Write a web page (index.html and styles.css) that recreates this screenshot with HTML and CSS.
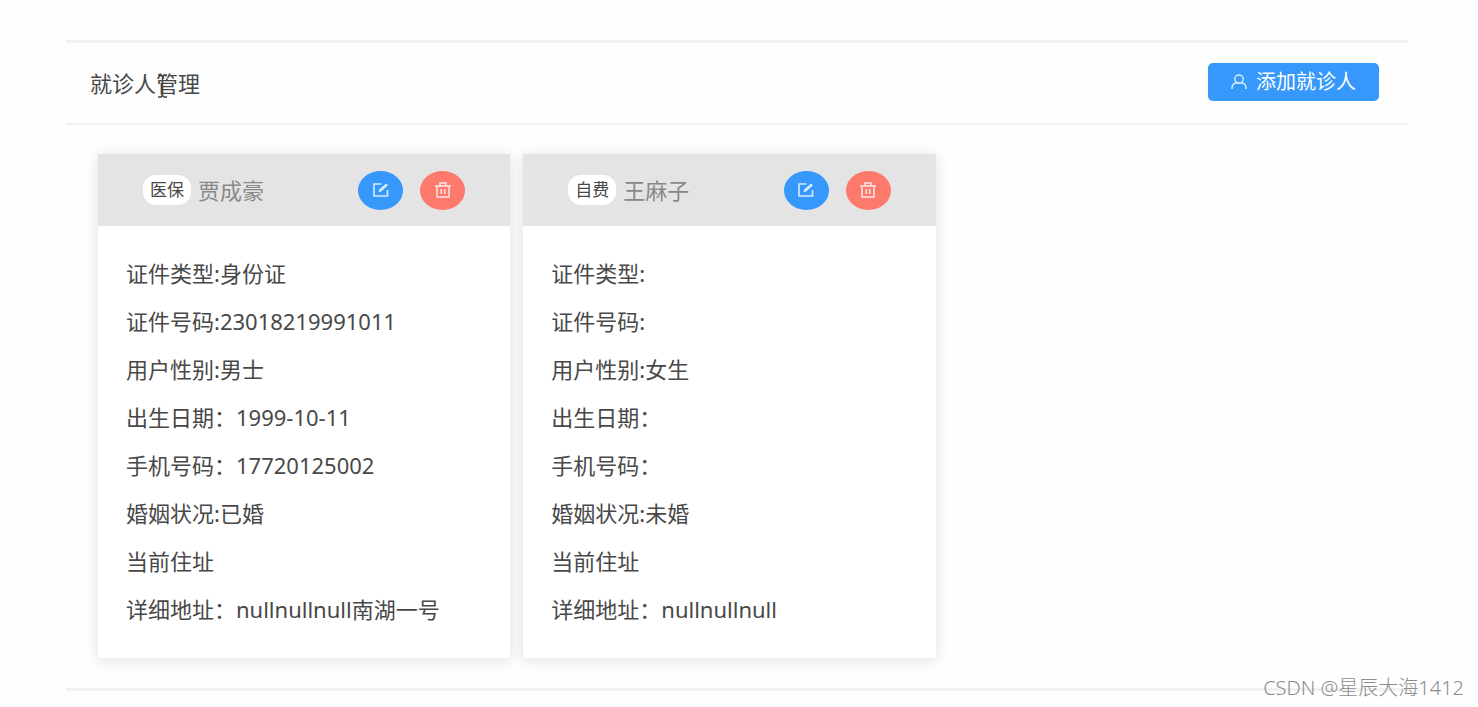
FILE: index.html
```html
<!DOCTYPE html>
<html lang="zh-CN">
<head>
    <meta charset="UTF-8">
    <title>就诊人管理</title>
    <link rel="stylesheet" href="styles.css">
</head>
<body>
<svg class="icons" aria-hidden="true">
    <symbol id="icon-edit" viewBox="0 0 18 16">
        <path d="M9.5 2H2v12h13.5V8" fill="none" stroke="currentColor" stroke-width="1.6"/>
        <path d="M6.5 10.5l.7-3L14 1.500l2 1.800-6.800 6.200z" fill="currentColor"/>
    </symbol>
    <symbol id="icon-delete" viewBox="0 0 18 16">
        <path d="M1 4h16M3 4v11h12V4M6 4V1h6v3M7.3 7v5M10.7 7v5" fill="none" stroke="currentColor" stroke-width="1.5"/>
    </symbol>
</svg>
<div class="panel">
    <div class="panel-header">
        <h1>就诊人管理</h1>
        <button type="button" class="add-btn">
            <svg class="user-icon" viewBox="0 0 16 16" aria-hidden="true">
                <ellipse cx="8" cy="5" rx="4.2" ry="4"/>
                <path d="M1 15v-1c0-3 2-5 5-5h4c3 0 5 2 5 5v1"/>
            </svg>
            <span>添加就诊人</span>
        </button>
    </div>
    <div class="patient-list">
        <div class="card">
            <div class="card-header">
                <span class="tag">医保</span>
                <span class="name">贾成豪</span>
                <div class="actions">
                    <button type="button" class="edit" aria-label="编辑"><svg><use href="#icon-edit"/></svg></button>
                    <button type="button" class="delete" aria-label="删除"><svg><use href="#icon-delete"/></svg></button>
                </div>
            </div>
            <div class="card-body">
                <p>证件类型:身份证</p>
                <p>证件号码:23018219991011</p>
                <p>用户性别:男士</p>
                <p>出生日期：1999-10-11</p>
                <p>手机号码：17720125002</p>
                <p>婚姻状况:已婚</p>
                <p>当前住址</p>
                <p>详细地址：nullnullnull南湖一号</p>
            </div>
        </div>
        <div class="card">
            <div class="card-header">
                <span class="tag">自费</span>
                <span class="name">王麻子</span>
                <div class="actions">
                    <button type="button" class="edit" aria-label="编辑"><svg><use href="#icon-edit"/></svg></button>
                    <button type="button" class="delete" aria-label="删除"><svg><use href="#icon-delete"/></svg></button>
                </div>
            </div>
            <div class="card-body">
                <p>证件类型:</p>
                <p>证件号码:</p>
                <p>用户性别:女生</p>
                <p>出生日期：</p>
                <p>手机号码：</p>
                <p>婚姻状况:未婚</p>
                <p>当前住址</p>
                <p>详细地址：nullnullnull</p>
            </div>
        </div>
    </div>
</div>
<svg class="cursor" viewBox="0 0 11 24" aria-hidden="true">
    <path d="M1 1h3l1.5 1.5L7 1h3M5.500 2.500v19M1 23h3l1.500-1.500L7 23h3"/>
</svg>
<div class="watermark">CSDN @星辰大海1412</div>
</body>
</html>
```
FILE: styles.css
```css
* {
    box-sizing: border-box;
}
body {
    position: relative;
    margin: 0;
    padding: 40px 70px 16px 66px;
    background-color: #fefefe;
    color: #484848;
    font-family: "Noto Sans", "Noto Sans CJK SC", sans-serif;
    font-size: 22px;
}
button {
    border: none;
    padding: 0;
    color: #fff;
    font-family: inherit;
    cursor: pointer;
}
.icons {
    display: none;
}
.panel {
    border-top: 3px solid #f1f1f1;
    border-bottom: 3px solid #f1f1f1;
}
.panel-header {
    display: flex;
    align-items: center;
    justify-content: space-between;
    height: 82px;
    padding: 0 29px 2px 24px;
    border-bottom: 2px solid #f0f0f0;
}
.panel-header h1 {
    margin: 0;
    font-size: 22px;
    font-weight: 400;
}
.add-btn {
    display: flex;
    align-items: center;
    gap: 9px;
    height: 38px;
    padding: 0 23px;
    border-radius: 5px;
    background-color: #3598fa;
    font-size: 20px;
    line-height: 38px;
}
.user-icon {
    width: 16px;
    height: 16px;
    fill: none;
    stroke: #d4eaff;
    stroke-width: 1.5;
}
.patient-list {
    display: grid;
    grid-template-columns: repeat(3, 1fr);
    gap: 13px;
    padding: 29px 47px 30px 32px;
}
.card {
    background-color: #fff;
    box-shadow: 0 2px 14px rgba(0, 0, 0, 0.12);
}
.card-header {
    display: flex;
    align-items: center;
    height: 72px;
    padding: 0 45px;
    background-color: #e4e4e4;
}
.tag {
    padding: 0 7px;
    border-radius: 13px;
    background-color: #fff;
    font-size: 17px;
    line-height: 30px;
}
.name {
    margin-left: 7px;
    color: #888;
    line-height: 30px;
}
.actions {
    display: flex;
    gap: 17px;
    margin-left: auto;
}
.actions button {
    display: flex;
    align-items: center;
    justify-content: center;
    width: 45px;
    height: 39px;
    border-radius: 50%;
    color: #d8eaff;
}
.actions svg {
    width: 18px;
    height: 16px;
}
.actions .edit {
    background-color: #3598fa;
}
.actions .delete {
    background-color: #fd796c;
    color: #ffe6e2;
}
.card-body {
    padding: 23px 28px 25px;
}
.card-body p {
    margin: 0;
    line-height: 48px;
    white-space: nowrap;
}
/* text cursor over the title */
.cursor {
    position: absolute;
    top: 74px;
    left: 157px;
    width: 11px;
    height: 24px;
    fill: none;
    stroke: #444;
    stroke-width: 1.5;
}
.watermark {
    position: absolute;
    right: 14px;
    bottom: 4px;
    color: #8c8c8c;
    font-size: 20px;
    font-weight: 300;
    line-height: 30px;
}
```
